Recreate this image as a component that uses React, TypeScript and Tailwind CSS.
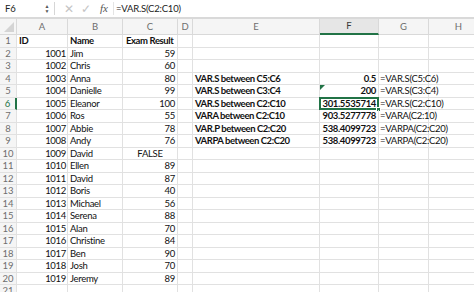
import React from "react";

type Row = { a?: string; b?: string; c?: string; e?: string; f?: string; g?: string };

const students: [string, string, string][] = [
  ["1001", "Jim", "59"],
  ["1002", "Chris", "60"],
  ["1003", "Anna", "80"],
  ["1004", "Danielle", "99"],
  ["1005", "Eleanor", "100"],
  ["1006", "Ros", "55"],
  ["1007", "Abbie", "78"],
  ["1008", "Andy", "76"],
  ["1009", "David", "FALSE"],
  ["1010", "Ellen", "89"],
  ["1011", "David", "87"],
  ["1012", "Boris", "40"],
  ["1013", "Michael", "56"],
  ["1014", "Serena", "88"],
  ["1015", "Alan", "70"],
  ["1016", "Christine", "84"],
  ["1017", "Ben", "90"],
  ["1018", "Josh", "70"],
  ["1019", "Jeremy", "89"],
];

const stats: Record<number, [string, string, string]> = {
  4: ["VAR.S between C5:C6", "0.5", "=VAR.S(C5:C6)"],
  5: ["VAR.S between C3:C4", "200", "=VAR.S(C3:C4)"],
  6: ["VAR.S between C2:C10", "301.5535714", "=VAR.S(C2:C10)"],
  7: ["VARA between C2:C10", "903.5277778", "=VARA(C2:10)"],
  8: ["VAR.P between C2:C20", "538.4099723", "=VARPA(C2:C20)"],
  9: ["VARPA between C2:C20", "538.4099723", "=VARPA(C2:C20)"],
};

const cell = "h-full shrink-0 border-r border-b border-[#e1e1e1] whitespace-nowrap flex items-center";

const SheetRow = ({ n, row }: { n: number; row: Row }) => {
  const active = n === 6;
  const isFalse = row.c === "FALSE";
  return (
    <div className="flex h-[12.5px] text-[9.5px] tracking-[-0.3px] text-[#111]">
      <div
        className={`${cell} w-[17px] justify-center bg-[#f5f5f5] tracking-normal ${
          active ? "text-[#217346] border-r-2 border-r-[#217346]" : "text-[#6e6e6e]"
        }`}
      >
        {n}
      </div>
      <div className={`${cell} w-[51px] justify-end pr-[1px] ${n === 1 ? "justify-start pl-[2px] font-bold" : ""}`}>
        {row.a}
      </div>
      <div className={`${cell} w-[55px] pl-[2px] ${n === 1 ? "font-bold" : ""}`}>{row.b}</div>
      <div
        className={`${cell} w-[55px] ${
          n === 1 ? "pl-[3px] font-bold tracking-[-0.4px]" : isFalse ? "justify-center" : "justify-end pr-[2px]"
        }`}
      >
        {row.c}
      </div>
      <div className={`${cell} w-[15px]`} />
      <div className={`${cell} w-[127px] pl-[2px] font-bold tracking-[-0.45px]`}>{row.e}</div>
      <div className={`${cell} relative w-[59px] justify-end pr-[2px] font-bold tracking-[-0.35px]`}>
        {n === 5 && (
          <span className="absolute left-0 top-0 w-0 h-0 border-t-[5px] border-r-[5px] border-t-[#217346] border-r-transparent" />
        )}
        {active && (
          <>
            <span className="absolute -left-[1px] -top-[1px] -right-[1px] -bottom-[1px] border-2 border-[#217346]" />
            <span className="absolute -right-[3px] -bottom-[3px] w-[5px] h-[5px] bg-[#217346] border border-white" />
          </>
        )}
        <span className="relative">{row.f}</span>
      </div>
      <div className={`${cell} w-[50px] pl-[1px]`}>{row.g}</div>
      <div className={`${cell} w-[60px]`} />
    </div>
  );
};

export default function App() {
  const rows: Row[] = [{ a: "ID", b: "Name", c: "Exam Result" }];
  students.forEach(([a, b, c], i) => {
    const s = stats[i + 2];
    rows.push({ a, b, c, e: s?.[0], f: s?.[1], g: s?.[2] });
  });
  rows.push({});

  return (
    <div
      className="w-[474px] h-[292px] overflow-hidden bg-white text-[#111] leading-none"
      style={{ fontFamily: "Lato, 'Liberation Sans', sans-serif" }}
    >
      {/* formula bar */}
      <div className="flex items-center h-[17px] text-[9.5px]">
        <div className="w-[43px] pl-[5px] text-[#222]">F6</div>
        <div className="flex flex-col items-center text-[#555] text-[5px] leading-[5px] w-[8px]">
          <span>▲</span>
          <span>▼</span>
        </div>
        <div className="ml-[3px] h-[13px] border-l border-[#d6d6d6]" />
        <span className="ml-[9px] text-[#c4c4c4] text-[12px]">✕</span>
        <span className="ml-[7px] text-[#c4c4c4] text-[12px]">✓</span>
        <span className="ml-[9px] text-[#555] italic text-[11px]" style={{ fontFamily: "'Liberation Serif', serif" }}>
          fx
        </span>
        <div className="ml-[5px] h-[13px] border-l border-[#e4e4e4]" />
        <span className="ml-[2px] text-[#222] tracking-[-0.2px]">=VAR.S(C2:C10)</span>
      </div>
      <div className="h-[2px] bg-[#d9d9d9]" />

      {/* column headers */}
      <div className="flex h-[16px] bg-[#f5f5f5] text-[#6e6e6e] text-[9.5px]">
        <div className="relative w-[17px] shrink-0 border-r border-b border-[#d9d9d9]">
          <span className="absolute right-[2px] bottom-[2px] w-0 h-0 border-b-[10px] border-l-[10px] border-b-[#d4d4d4] border-l-transparent" />
        </div>
        {[
          ["A", "w-[51px]"],
          ["B", "w-[55px]"],
          ["C", "w-[55px]"],
          ["D", "w-[15px]"],
          ["E", "w-[127px]"],
          ["F", "w-[59px]"],
          ["G", "w-[50px]"],
          ["H", "w-[60px]"],
        ].map(([l, w]) => (
          <div
            key={l}
            className={`${w} shrink-0 flex items-center justify-center border-r border-[#d9d9d9] ${
              l === "F" ? "bg-[#e6e6e6] border-b-2 border-b-[#217346] text-[#3a3a3a]" : "border-b"
            }`}
          >
            {l}
          </div>
        ))}
      </div>

      {rows.map((r, i) => (
        <SheetRow key={i} n={i + 1} row={r} />
      ))}
    </div>
  );
}
